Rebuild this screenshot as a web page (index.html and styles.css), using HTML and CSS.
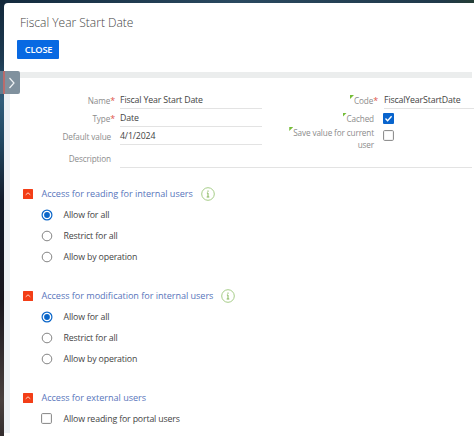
FILE: index.html
```html
<!DOCTYPE html>
<html lang="en">
<head>
<meta charset="utf-8">
<title>Fiscal Year Start Date</title>
<link rel="stylesheet" href="styles.css">
</head>
<body>
<div class="sheet">
  <header class="header">
    <h1 class="title">Fiscal Year Start Date</h1>
    <button class="close">CLOSE</button>
  </header>
  <div class="band"></div>
  <main class="content">
    <div class="fields">
      <div class="column">
        <div class="row"><label class="label">Name<b class="req">*</b></label><span class="value">Fiscal Year Start Date</span></div>
        <div class="row"><label class="label">Type<b class="req">*</b></label><span class="value">Date</span></div>
        <div class="row"><label class="label">Default value</label><span class="value">4/1/2024</span></div>
      </div>
      <div class="column right">
        <div class="row"><label class="label"><i class="mark"></i>Code<b class="req">*</b></label><span class="value">FiscalYearStartDate</span></div>
        <div class="row"><label class="label"><i class="mark"></i>Cached</label><svg class="box" viewBox="0 0 11 11"><rect width="11" height="11" rx="1" fill="#0864cd"/><path d="M2.5 5.6l2.1 2.1 4-4.4" fill="none" stroke="#fff" stroke-width="1.4"/></svg></div>
        <div class="row save"><label class="label"><i class="mark"></i>Save value for current<br>user</label><svg class="box" viewBox="0 0 11 11"><rect x=".6" y=".6" width="9.8" height="9.8" rx="1" fill="#fff" stroke="#858585"/></svg></div>
      </div>
    </div>
    <div class="row description"><label class="label">Description</label><span class="value"></span></div>

    <section class="group">
      <h2 class="heading"><svg class="toggle" viewBox="0 0 10 10"><rect width="10" height="10" rx=".5" fill="#f33e17"/><path d="M2.7 5.8L5 3.8l2.3 2" fill="none" stroke="#ffd5c5"/></svg><span>Access for reading for internal users</span><svg class="info" viewBox="0 0 14 14"><circle cx="7" cy="7" r="6.3" fill="#fff" stroke="#9cc77b" stroke-width=".9"/><path d="M7 3.5v1.3M5.9 6H7v4M5.7 10h2.6" fill="none" stroke="#85b65b"/></svg></h2>
      <label class="option"><svg class="radio" viewBox="0 0 12 12"><circle cx="6" cy="6" r="4.9" fill="#fff" stroke="#0b66c9" stroke-width="1.2"/><circle cx="6" cy="6" r="2.9" fill="#0b66c9"/></svg>Allow for all</label>
      <label class="option"><svg class="radio" viewBox="0 0 12 12"><circle cx="6" cy="6" r="4.8" fill="#fff" stroke="#858585"/></svg>Restrict for all</label>
      <label class="option"><svg class="radio" viewBox="0 0 12 12"><circle cx="6" cy="6" r="4.8" fill="#fff" stroke="#858585"/></svg>Allow by operation</label>
    </section>
    <section class="group">
      <h2 class="heading"><svg class="toggle" viewBox="0 0 10 10"><rect width="10" height="10" rx=".5" fill="#f33e17"/><path d="M2.7 5.8L5 3.8l2.3 2" fill="none" stroke="#ffd5c5"/></svg><span>Access for modification for internal users</span><svg class="info" viewBox="0 0 14 14"><circle cx="7" cy="7" r="6.3" fill="#fff" stroke="#9cc77b" stroke-width=".9"/><path d="M7 3.5v1.3M5.9 6H7v4M5.7 10h2.6" fill="none" stroke="#85b65b"/></svg></h2>
      <label class="option"><svg class="radio" viewBox="0 0 12 12"><circle cx="6" cy="6" r="4.9" fill="#fff" stroke="#0b66c9" stroke-width="1.2"/><circle cx="6" cy="6" r="2.9" fill="#0b66c9"/></svg>Allow for all</label>
      <label class="option"><svg class="radio" viewBox="0 0 12 12"><circle cx="6" cy="6" r="4.8" fill="#fff" stroke="#858585"/></svg>Restrict for all</label>
      <label class="option"><svg class="radio" viewBox="0 0 12 12"><circle cx="6" cy="6" r="4.8" fill="#fff" stroke="#858585"/></svg>Allow by operation</label>
    </section>
    <section class="group last">
      <h2 class="heading"><svg class="toggle" viewBox="0 0 10 10"><rect width="10" height="10" rx=".5" fill="#f33e17"/><path d="M2.7 5.8L5 3.8l2.3 2" fill="none" stroke="#ffd5c5"/></svg><span>Access for external users</span></h2>
      <label class="option portal"><svg class="box" viewBox="0 0 11 11"><rect x=".6" y=".6" width="9.8" height="9.8" rx="1" fill="#fff" stroke="#858585"/></svg>Allow reading for portal users</label>
    </section>
  </main>
  <div class="drawer"><svg viewBox="0 0 8 12"><path d="M1.5 1l4.5 5-4.5 5" fill="none" stroke="#eef2f4" stroke-width="1.2"/></svg></div>
</div>
</body>
</html>
```

FILE: styles.css
```css
* { box-sizing: border-box; }
body {
  margin: 0;
  height: 436px;
  overflow: hidden;
  padding: 3px 0 0 4px;
  background: linear-gradient(#122739 0, #1e3b52 60px, #315d7b 100px, #214862 140px, #111b2b 200px, #18151d 300px, #49403f 400px, #332d2e 436px) 0 0 / 5px 436px no-repeat,
    linear-gradient(90deg, #132a3d, #2a4960 50%, #20394a 93%, #243d35);
  font: 8.8px/12px "Open Sans", "Noto Sans", sans-serif;
  letter-spacing: -0.16px;
  color: #444;
}
svg { display: block; flex: none; }
.sheet { position: relative; height: 433px; background: #fff; border-radius: 4px 0 0 0; }
.header { height: 69px; padding: 11px 0 0 16px; }
.title { margin: 0; font-size: 12px; line-height: 18px; font-weight: 300; color: #444; letter-spacing: 0; }
.close {
  display: flex; align-items: center; justify-content: center;
  width: 42px; height: 19px; margin: 8px 0 0 -3px; padding: 0 0 0 1px;
  border: 0; border-radius: 1px; background: #0869e2; color: #fff;
  font: 600 9.3px/12px "Open Sans", sans-serif; letter-spacing: -0.2px;
}
.band { height: 6px; margin: 0 2px 0 16px; background: #ebeded; }
.content { height: 355px; padding: 13px 0 0 12.5px; border-left: 6px solid #edf1f5; }
.fields { display: flex; height: 54px; }
.column { width: 240px; }
.right { width: 211.5px; }
.row { display: flex; height: 18px; }
.label { flex: none; width: 89.5px; padding-right: 1px; font-size: 8.2px; letter-spacing: -0.13px; line-height: 19px; text-align: right; color: #8c8c8c; }
.right .label { width: 112.5px; }
.req { color: #e0564e; font-size: 9px; font-weight: 400; line-height: 1; margin-right: -4px; }
.value { width: 142px; margin-left: 8px; line-height: 18px; border-bottom: 1px solid #e3e3e3; white-space: nowrap; }
.right .value { flex: 1; margin-left: 9px; }
.box { width: 11px; height: 11px; }
.right .box { margin: 4px 0 0 8px; }
.save .label { line-height: 12px; }
.save .box { margin-top: 3px; }
.mark { display: inline-block; width: 4px; height: 4px; vertical-align: 5px; background: #75bd37; clip-path: polygon(0 0, 100% 0, 0 100%); }
.description { height: 23px; }
.description .label { line-height: 28px; }
.description .value { flex: 1; margin-right: 2px; }
.group { height: 102px; padding-top: 17px; }
.last { height: 60px; }
.heading { display: flex; align-items: center; height: 18px; margin: 0 0 1px; font: inherit; font-size: 9.1px; letter-spacing: -0.04px; color: #5875bb; }
.toggle { width: 10px; height: 10px; margin-right: 9px; }
.info { width: 14px; height: 14px; margin-left: 8px; }
.option { display: flex; align-items: center; height: 21px; padding-left: 18px; }
.radio { width: 12px; height: 12px; margin-right: 11px; }
.portal .box { margin-right: 12px; }
.drawer {
  position: absolute; left: -4px; top: 68px; width: 20px; height: 23px;
  display: flex; align-items: center; padding-left: 8px;
  background: linear-gradient(90deg, #637d91 3px, #b96c6c 3px, #b96c6c 5px, #80919e 5px);
  border-radius: 0 2px 2px 0;
}
.drawer svg { width: 8px; height: 12px; }
```
